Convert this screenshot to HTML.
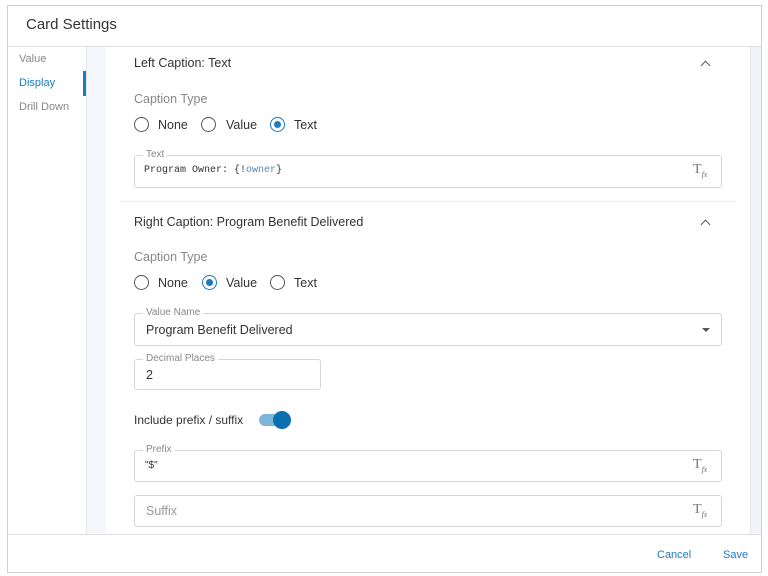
<!DOCTYPE html>
<html><head><style>
*{box-sizing:border-box;margin:0;padding:0}
body{width:768px;height:576px;background:#fff;font-family:"Liberation Sans",sans-serif;position:relative;overflow:hidden;color:#333}
.a{position:absolute}
.dlg{left:7px;top:5px;width:755px;height:568px;border:1px solid #cfcfcf;background:#fff}
.t{font-size:12.5px;color:#333}
.g{color:#888;font-size:12.5px}
.radio{width:15px;height:15px;border:1.5px solid #555;border-radius:50%}
.radio.on{border-color:#1a7bbf}
.radio.on::after{content:"";position:absolute;left:2.5px;top:2.5px;width:7px;height:7px;border-radius:50%;background:#1a7bbf}
.fld{border:1px solid #d6d6d6;border-radius:3px;background:#fff}
.lbl{font-size:10px;color:#888;background:#fff;padding:0 3px}
.fx{font-family:"Liberation Serif",serif;color:#777;font-size:14px}
.fx sub{font-size:8px;font-style:italic}
.chev{width:7px;height:7px;border-left:1.5px solid #555;border-top:1.5px solid #555;transform:rotate(45deg)}
</style></head><body>
<div class="a dlg"></div>
<div class="a" style="left:26px;top:16px;font-size:15px;color:#333">Card Settings</div>
<div class="a" style="left:8px;top:46px;width:753px;height:1px;background:#e2e2e2"></div>
<div class="a" style="left:86px;top:47px;width:20px;height:487px;background:#f5f6f9;border-left:1px solid #e6e6e6"></div>
<div class="a" style="left:750px;top:47px;width:11px;height:487px;background:#f3f4f8;border-left:1px solid #e6e6e6"></div>
<div class="a" style="left:8px;top:534px;width:753px;height:1px;background:#e2e2e2"></div>
<div class="a g" style="left:19px;top:53px;font-size:11px">Value</div>
<div class="a" style="left:19px;top:77px;font-size:11px;color:#1a7bbf">Display</div>
<div class="a" style="left:83px;top:71px;width:3px;height:25px;background:#1a7bbf"></div>
<div class="a g" style="left:19px;top:101px;font-size:11px">Drill Down</div>

<div class="a t" style="left:134px;top:56px">Left Caption: Text</div>
<div class="a chev" style="left:702px;top:62px"></div>
<div class="a g" style="left:134px;top:92px">Caption Type</div>
<div class="a radio" style="left:134px;top:117px"></div><div class="a t" style="left:158px;top:118px">None</div>
<div class="a radio" style="left:201px;top:117px"></div><div class="a t" style="left:226px;top:118px">Value</div>
<div class="a radio on" style="left:270px;top:117px"></div><div class="a t" style="left:294px;top:118px">Text</div>
<div class="a fld" style="left:134px;top:155px;width:588px;height:33px"></div>
<div class="a lbl" style="left:143px;top:149px">Text</div>
<div class="a" style="left:144px;top:165px;font-family:'Liberation Mono',monospace;font-size:10px;color:#333">Program Owner: {!<span style="color:#5a8ab0">owner</span>}</div>
<div class="a fx" style="left:693px;top:162px">T<sub>fx</sub></div>
<div class="a" style="left:120px;top:201px;width:616px;height:1px;background:#ececec"></div>

<div class="a t" style="left:134px;top:215px">Right Caption: Program Benefit Delivered</div>
<div class="a chev" style="left:702px;top:221px"></div>
<div class="a g" style="left:134px;top:250px">Caption Type</div>
<div class="a radio" style="left:134px;top:275px"></div><div class="a t" style="left:158px;top:276px">None</div>
<div class="a radio on" style="left:202px;top:275px"></div><div class="a t" style="left:226px;top:276px">Value</div>
<div class="a radio" style="left:270px;top:275px"></div><div class="a t" style="left:294px;top:276px">Text</div>
<div class="a fld" style="left:134px;top:313px;width:588px;height:33px"></div>
<div class="a lbl" style="left:143px;top:307px">Value Name</div>
<div class="a t" style="left:146px;top:323px">Program Benefit Delivered</div>
<div class="a" style="left:702px;top:328px;border-left:4px solid transparent;border-right:4px solid transparent;border-top:4px solid #555"></div>
<div class="a fld" style="left:134px;top:359px;width:187px;height:31px"></div>
<div class="a lbl" style="left:143px;top:353px">Decimal Places</div>
<div class="a t" style="left:146px;top:368px">2</div>

<div class="a t" style="left:134px;top:413px;font-size:12px">Include prefix / suffix</div>
<div class="a" style="left:259px;top:414px;width:26px;height:12px;border-radius:6px;background:#7db4da"></div>
<div class="a" style="left:273px;top:411px;width:18px;height:18px;border-radius:50%;background:#0b6fb0"></div>
<div class="a fld" style="left:134px;top:450px;width:588px;height:32px"></div>
<div class="a lbl" style="left:143px;top:444px">Prefix</div>
<div class="a" style="left:145px;top:460px;font-size:10px;color:#333">"$"</div>
<div class="a fx" style="left:693px;top:457px">T<sub>fx</sub></div>
<div class="a fld" style="left:134px;top:495px;width:588px;height:32px"></div>
<div class="a" style="left:146px;top:504px;font-size:12.5px;color:#999">Suffix</div>
<div class="a fx" style="left:693px;top:502px">T<sub>fx</sub></div>

<div class="a" style="left:657px;top:549px;font-size:11px;color:#1a7bbf">Cancel</div>
<div class="a" style="left:723px;top:549px;font-size:11px;color:#1a7bbf">Save</div>
</body></html>
